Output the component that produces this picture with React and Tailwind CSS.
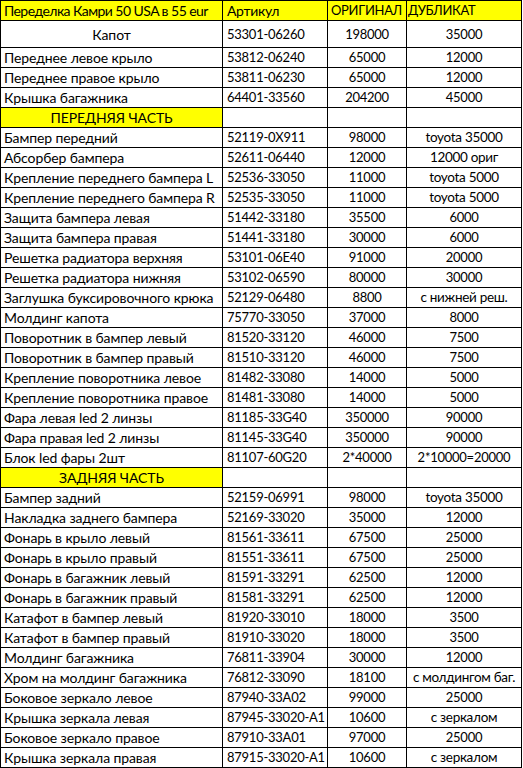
import React from "react";

const front = [
  ["Бампер передний", "52119-0X911", "98000", "toyota 35000"],
  ["Абсорбер бампера", "52611-06440", "12000", "12000 ориг"],
  ["Крепление переднего бампера L", "52536-33050", "11000", "toyota 5000"],
  ["Крепление переднего бампера R", "52535-33050", "11000", "toyota 5000"],
  ["Защита бампера левая", "51442-33180", "35500", "6000"],
  ["Защита бампера правая", "51441-33180", "30000", "6000"],
  ["Решетка радиатора верхняя", "53101-06E40", "91000", "20000"],
  ["Решетка радиатора нижняя", "53102-06590", "80000", "30000"],
  ["Заглушка буксировочного крюка", "52129-06480", "8800", "с нижней реш."],
  ["Молдинг капота", "75770-33050", "37000", "8000"],
  ["Поворотник в бампер левый", "81520-33120", "46000", "7500"],
  ["Поворотник в бампер правый", "81510-33120", "46000", "7500"],
  ["Крепление поворотника левое", "81482-33080", "14000", "5000"],
  ["Крепление поворотника правое", "81481-33080", "14000", "5000"],
  ["Фара левая led 2 линзы", "81185-33G40", "350000", "90000"],
  ["Фара правая led 2 линзы", "81145-33G40", "350000", "90000"],
  ["Блок led фары 2шт", "81107-60G20", "2*40000", "2*10000=20000"],
];

const rear = [
  ["Бампер задний", "52159-06991", "98000", "toyota 35000"],
  ["Накладка заднего бампера", "52169-33020", "35000", "12000"],
  ["Фонарь в крыло левый", "81561-33611", "67500", "25000"],
  ["Фонарь в крыло правый", "81551-33611", "67500", "25000"],
  ["Фонарь в багажник левый", "81591-33291", "62500", "12000"],
  ["Фонарь в багажник правый", "81581-33291", "62500", "12000"],
  ["Катафот в бампер левый", "81920-33010", "18000", "3500"],
  ["Катафот в бампер правый", "81910-33020", "18000", "3500"],
  ["Молдинг багажника", "76811-33904", "30000", "12000"],
  ["Хром на молдинг багажника", "76812-33090", "18100", "с молдингом баг."],
  ["Боковое зеркало левое", "87940-33A02", "99000", "25000"],
  ["Крышка зеркала левая", "87945-33020-A1", "10600", "с зеркалом"],
  ["Боковое зеркало правое", "87910-33A01", "97000", "25000"],
  ["Крышка зеркала правая", "87915-33020-A1", "10600", "с зеркалом"],
];

const top = [
  ["Переднее левое крыло", "53812-06240", "65000", "12000"],
  ["Переднее правое крыло", "53811-06230", "65000", "12000"],
  ["Крышка багажника", "64401-33560", "204200", "45000"],
];

const cell = "border-r border-b border-black flex items-center whitespace-nowrap overflow-hidden leading-[19px]";
const name = "text-[14px] tracking-[-0.1px]";
const num = "text-[13px] tracking-[-0.25px]";
const txt = "text-[13.5px] tracking-[-0.3px]";

function Row({ r, h = "h-[20px]" }) {
  const isNum = (s) => /^[0-9*=]+$/.test(s);
  return (
    <>
      <div className={`${cell} ${h} ${name} pl-[3px]`}>{r[0]}</div>
      <div className={`${cell} ${h} ${num} pl-[4px]`}>{r[1]}</div>
      <div className={`${cell} ${h} ${num} justify-center`}>{r[2]}</div>
      <div className={`${cell} ${h} ${isNum(r[3]) ? num : txt} justify-center`}>{r[3]}</div>
    </>
  );
}

function Section({ title }) {
  return (
    <>
      <div className={`${cell} ${name} h-[20px] justify-center bg-[#ffff00]`}>{title}</div>
      <div className={`${cell} h-[20px]`}></div>
      <div className={`${cell} h-[20px]`}></div>
      <div className={`${cell} h-[20px]`}></div>
    </>
  );
}

export default function App() {
  return (
    <div className="w-[523px] h-[768px] bg-white overflow-hidden text-black" style={{ fontFamily: "Lato, 'Noto Sans', sans-serif" }}>
      <div className="w-[522px] grid grid-cols-[222px_105px_79px_115px] border-l border-t border-black">
        <div className={`${cell} h-[20px] pl-[3px] bg-[#ffff00] text-[14px] tracking-[-0.55px]`}>Переделка Камри 50 USA в 55 eur</div>
        <div className={`${cell} h-[20px] pl-[4px] bg-[#ffff00] text-[14px] tracking-[-0.3px]`}>Артикул</div>
        <div className={`${cell} h-[20px] pl-[3px] bg-[#ffff00] text-[13px] tracking-[-0.3px]`}>ОРИГИНАЛ</div>
        <div className={`${cell} h-[20px] pl-[1px] bg-[#ffff00] text-[13px] tracking-[-0.3px]`}>ДУБЛИКАТ</div>

        <div className={`${cell} ${name} h-[27px] justify-center`}>Капот</div>
        <div className={`${cell} ${num} h-[27px] pl-[4px]`}>53301-06260</div>
        <div className={`${cell} ${num} h-[27px] justify-center`}>198000</div>
        <div className={`${cell} ${num} h-[27px] justify-center`}>35000</div>

        {top.map((r, i) => <Row key={"t" + i} r={r} />)}
        <Section title="ПЕРЕДНЯЯ ЧАСТЬ" />
        {front.map((r, i) => <Row key={"f" + i} r={r} />)}
        <Section title="ЗАДНЯЯ ЧАСТЬ" />
        {rear.map((r, i) => <Row key={"r" + i} r={r} />)}
      </div>
    </div>
  );
}
